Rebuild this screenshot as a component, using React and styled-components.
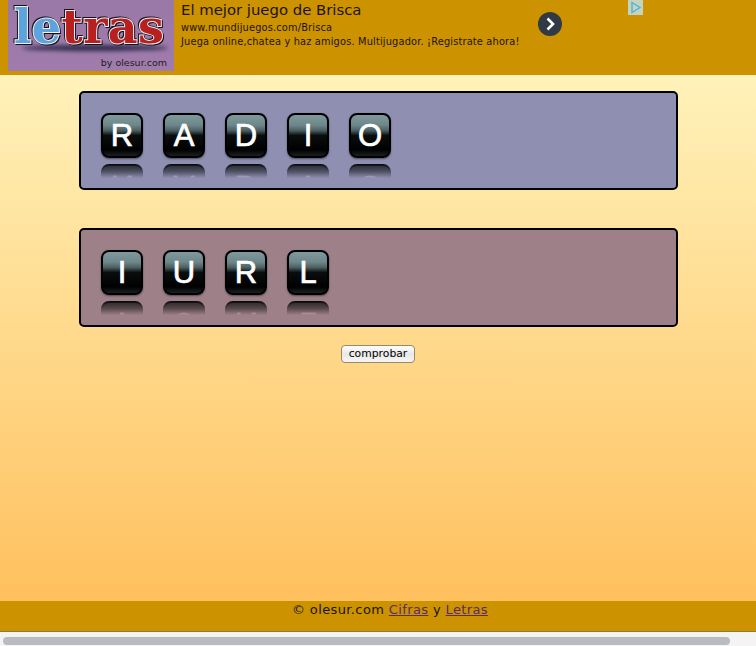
import styled, { createGlobalStyle } from "styled-components";

const GlobalStyle = createGlobalStyle`
  html, body {
    margin: 0;
    padding: 0;
    overflow: hidden;
  }
  body {
    font-family: "DejaVu Sans", Verdana, sans-serif;
    color: #1c1404;
  }
`;

const FIRST_WORD = ["R", "A", "D", "I", "O"];
const SECOND_WORD = ["I", "U", "R", "L"];

const App = () => (
  <Page>
    <GlobalStyle />
    <AdBar>
      <Logo>
        <LogoShadow />
        <LogoWord>
          <LogoBlue>le</LogoBlue>
          <LogoRed>tras</LogoRed>
        </LogoWord>
        <LogoBy>by olesur.com</LogoBy>
      </Logo>
      <AdCopy>
        <AdTitle>El mejor juego de Brisca</AdTitle>
        <AdLine>www.mundijuegos.com/Brisca</AdLine>
        <AdLine>Juega online,chatea y haz amigos. Multijugador. ¡Registrate ahora!</AdLine>
      </AdCopy>
      <AdArrow>
        <svg width="24" height="24" viewBox="0 0 24 24">
          <circle cx="12" cy="12" r="12" fill="#2f3a44" />
          <path d="M9.5 6.5 L15 12 L9.5 17.5" fill="none" stroke="#fff" strokeWidth="2.6" />
        </svg>
      </AdArrow>
      <AdChoice>
        <svg width="15" height="15" viewBox="0 0 15 15">
          <rect width="15" height="15" fill="#c4d4c0" />
          <path d="M4 2.5 L12 7.5 L4 12.5 Z" fill="none" stroke="#4fb4d8" strokeWidth="1.4" />
        </svg>
      </AdChoice>
    </AdBar>

    <Main>
      <Board $tint="#8f8fb2">
        {FIRST_WORD.map((letter, i) => (
          <Tile key={i} letter={letter} />
        ))}
      </Board>
      <Board $tint="#9d8088">
        {SECOND_WORD.map((letter, i) => (
          <Tile key={i} letter={letter} />
        ))}
      </Board>
      <CheckButton type="button">comprobar</CheckButton>
    </Main>

    <Footer>
      © olesur.com <FooterLink href="#">Cifras</FooterLink> y <FooterLink href="#">Letras</FooterLink>
    </Footer>

    <ScrollTrack>
      <ScrollThumb />
    </ScrollTrack>
  </Page>
);

const Tile = ({ letter }) => (
  <TileSlot>
    <TileFace>{letter}</TileFace>
    <Reflection>
      <ReflectionFace>{letter}</ReflectionFace>
    </Reflection>
  </TileSlot>
);

const Page = styled.div`
  width: 756px;
  height: 646px;
  display: flex;
  flex-direction: column;
  overflow: hidden;
`;

const AdBar = styled.div`
  position: relative;
  flex: none;
  height: 75px;
  display: flex;
  align-items: flex-start;
  padding-left: 8px;
  box-sizing: border-box;
  background: #cc9200;
`;

const Logo = styled.div`
  position: relative;
  flex: none;
  width: 166px;
  height: 71px;
  overflow: hidden;
  background: linear-gradient(#9a78a6, #a07cac);
`;

const LogoWord = styled.div`
  position: absolute;
  top: 2px;
  left: 6px;
  font-family: "DejaVu Serif", serif;
  font-size: 46px;
  font-weight: 700;
  line-height: 50px;
  letter-spacing: 0.4px;
  white-space: nowrap;
  -webkit-text-stroke: 2px #f2f0f4;
  paint-order: stroke fill;
  filter: drop-shadow(1px 1px 0 #15101c) drop-shadow(-1px -1px 0 #15101c);
`;

const LogoBlue = styled.span`
  color: #5ea4dc;
`;

const LogoRed = styled.span`
  color: #b8201f;
`;

const LogoShadow = styled.div`
  position: absolute;
  top: 45px;
  left: 14px;
  width: 146px;
  height: 6px;
  border-radius: 50%;
  background: #2c2a4a;
  filter: blur(2px);
`;

const LogoBy = styled.div`
  position: absolute;
  right: 7px;
  bottom: 3px;
  font-size: 9.5px;
  color: #1f1a24;
`;

const AdCopy = styled.div`
  flex: none;
  margin-left: 7px;
  display: flex;
  flex-direction: column;
`;

const AdTitle = styled.div`
  font-size: 14.85px;
  line-height: 20px;
  margin-bottom: 1px;
  white-space: nowrap;
`;

const AdLine = styled.div`
  font-size: 9.8px;
  line-height: 14px;
  letter-spacing: 0.17px;
  white-space: nowrap;
`;

const AdArrow = styled.div`
  position: absolute;
  top: 12px;
  left: 538px;
  width: 24px;
  height: 24px;
`;

const AdChoice = styled.div`
  position: absolute;
  top: 0;
  left: 628px;
  width: 15px;
  height: 15px;
`;

const Main = styled.main`
  flex: 1;
  display: flex;
  flex-direction: column;
  align-items: flex-start;
  padding: 16px 0 0 79px;
  box-sizing: border-box;
  background: linear-gradient(#fff2ba, #ffc05e);
`;

const Board = styled.section`
  width: 599px;
  height: 99px;
  box-sizing: border-box;
  margin-bottom: 38px;
  padding: 20px 0 0 20px;
  display: flex;
  gap: 20px;
  border: 2px solid #000;
  border-radius: 5px;
  background: ${(props) => props.$tint};
`;

const TileSlot = styled.div`
  width: 42px;
  display: flex;
  flex-direction: column;
  gap: 6px;
`;

const TileFace = styled.div`
  width: 42px;
  height: 45px;
  box-sizing: border-box;
  display: flex;
  align-items: center;
  justify-content: center;
  border: 2px solid #000;
  border-radius: 8px;
  font-family: "Liberation Sans", Arial, sans-serif;
  font-size: 31px;
  color: #fff;
  -webkit-text-stroke: 0.7px #fff;
  background: linear-gradient(
    #7f999c 0%,
    #6d8689 25%,
    #4a5e60 38%,
    #0a0d0e 50%,
    #000 85%,
    #1c2022 100%
  );
  box-shadow: 0 1px 2px rgba(0, 0, 0, 0.45);
`;

const Reflection = styled.div`
  height: 14px;
  overflow: hidden;
  -webkit-mask-image: linear-gradient(rgba(0, 0, 0, 0.95), rgba(0, 0, 0, 0));
  mask-image: linear-gradient(rgba(0, 0, 0, 0.95), rgba(0, 0, 0, 0));
`;

const ReflectionFace = styled(TileFace)`
  transform: scaleY(-1);
  box-shadow: none;
`;

const CheckButton = styled.button`
  align-self: center;
  margin: -20px 0 0 -79px;
  width: 74px;
  height: 18px;
  padding: 0;
  border: 1px solid #9a8a64;
  border-radius: 4px;
  font-family: "DejaVu Sans", Verdana, sans-serif;
  font-size: 10.8px;
  line-height: 16px;
  color: #000;
  background: linear-gradient(#fff 0%, #e8e8e8 50%, #f6f6f6 100%);
`;

const Footer = styled.footer`
  flex: none;
  height: 31px;
  box-sizing: border-box;
  padding-left: 24px;
  text-align: center;
  font-size: 13px;
  line-height: 18px;
  letter-spacing: 0.38px;
  color: #1c1404;
  background: #cc9200;
  border-bottom: 1px solid #8c7a3c;
`;

const FooterLink = styled.a`
  color: #5a2a66;
`;

const ScrollTrack = styled.div`
  flex: none;
  height: 14px;
  box-sizing: border-box;
  padding: 5px 26px 1px 3px;
  background: #f4f4f4;
`;

const ScrollThumb = styled.div`
  height: 8px;
  border-radius: 4px;
  background: #b8bcc0;
`;

export default App;
